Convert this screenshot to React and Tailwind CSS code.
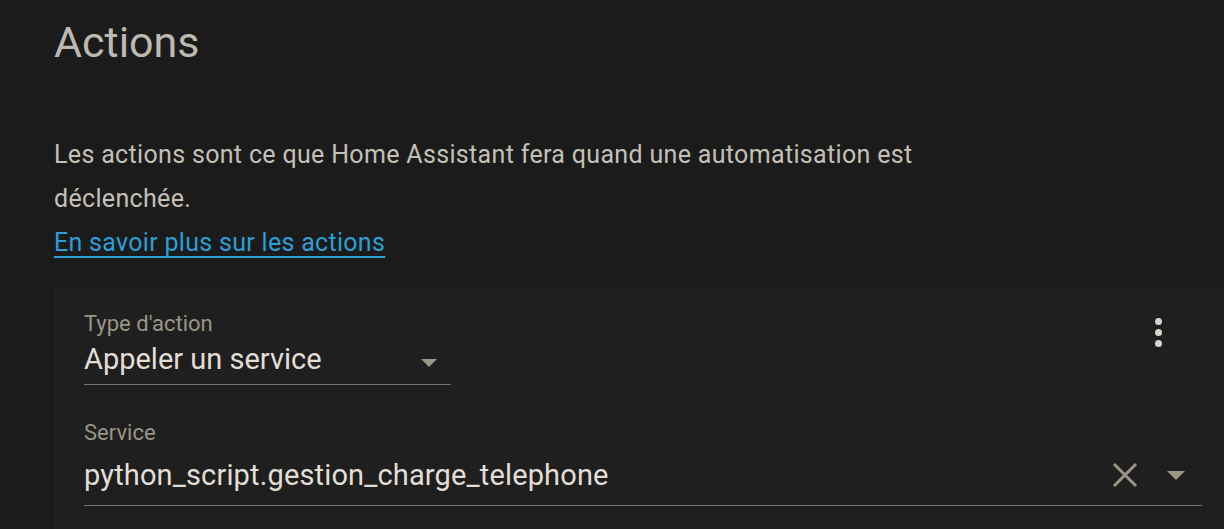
import React from "react";

export default function App() {
  return (
    <div className="w-[1224px] h-[529px] overflow-hidden bg-[#1b1b1b] font-['Roboto',sans-serif]">
      <div className="pl-[54px]">
        <h1 className="pt-[18px] text-[43px] leading-[48px] font-normal text-[#bdb9b1]">Actions</h1>
        <p className="mt-[67px] max-w-[900px] text-[25px] leading-[44px] tracking-[0.33px] text-[#c4c0b8]">
          Les actions sont ce que Home Assistant fera quand une automatisation est déclenchée.
        </p>
        <a href="#" className="block w-fit text-[25px] leading-[44px] tracking-[0.3px] text-[#2b9fd6] underline underline-offset-[5px] decoration-[1.5px]">
          En savoir plus sur les actions
        </a>
        <div className="mt-[24px] w-[1178px] h-[300px] bg-[#1f1f1f] pl-[30px] pt-[22px] flex flex-col">
          <div className="flex items-start justify-between">
            <div className="w-[367px] flex flex-col">
              <div className="text-[22px] leading-[26px] text-[#9b9587]">Type d'action</div>
              <div className="mt-[5px] flex items-start justify-between pr-[14px]">
                <span className="text-[29px] leading-[34px] text-[#e2ded6]">Appeler un service</span>
                <svg width="16" height="8" viewBox="0 0 16 8" className="mt-[17px]">
                  <path d="M0 0 L16 0 L8 8 Z" fill="#9b9587" />
                </svg>
              </div>
              <div className="mt-[8px] h-px bg-[#7a7468]" />
            </div>
            <div className="mr-[70px] mt-[7px] flex flex-col items-center gap-[4px]">
              <span className="block w-[7px] h-[7px] rounded-full bg-[#d8d4cc]" />
              <span className="block w-[7px] h-[7px] rounded-full bg-[#d8d4cc]" />
              <span className="block w-[7px] h-[7px] rounded-full bg-[#d8d4cc]" />
            </div>
          </div>
          <div className="mt-[35px] w-[1118px] flex flex-col">
            <div className="text-[22px] leading-[26px] text-[#9b9587]">Service</div>
            <div className="mt-[12px] flex items-start">
              <span className="flex-1 text-[29px] leading-[34px] tracking-[0.15px] text-[#e2ded6]">python_script.gestion_charge_telephone</span>
              <svg width="26" height="26" viewBox="0 0 26 26" className="mt-[4px]">
                <path d="M2 2 L24 24 M24 2 L2 24" stroke="#9b9587" strokeWidth="3" />
              </svg>
              <svg width="18" height="9" viewBox="0 0 18 9" className="ml-[29px] mr-[17px] mt-[13px]">
                <path d="M0 0 L18 0 L9 9 Z" fill="#9b9587" />
              </svg>
            </div>
            <div className="mt-[13px] h-px bg-[#7a7468]" />
          </div>
        </div>
      </div>
    </div>
  );
}
